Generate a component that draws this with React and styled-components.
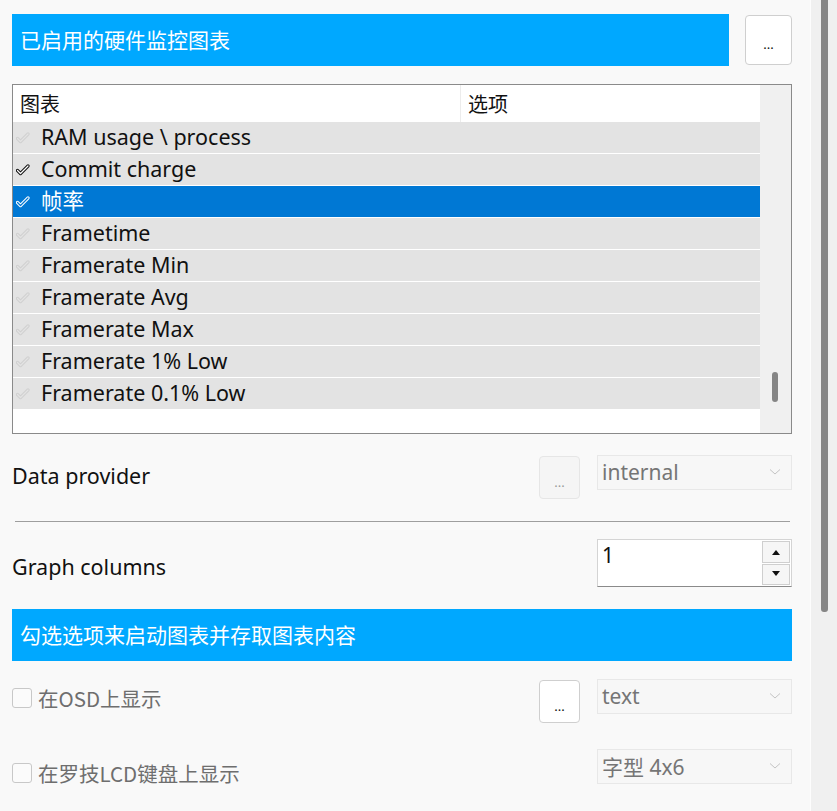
import React from "react";
import styled, { createGlobalStyle } from "styled-components";

const Global = createGlobalStyle`
  html, body { margin: 0; padding: 0; background: #f9f9f9; }
  body { font-family: "Noto Sans", "Noto Sans CJK SC", sans-serif; }
  * { box-sizing: border-box; }
`;

const Page = styled.div`
  display: flex;
  width: 837px;
  height: 811px;
  overflow: hidden;
  background: #f9f9f9;
`;

const Main = styled.div`
  flex: 1;
  display: flex;
  flex-direction: column;
  padding: 14px 18px 0 12px;
`;

const SideScroll = styled.div`
  width: 27px;
  background: #f0f0f0;
  border-left: 1px solid #fdfdfd;
  position: relative;
`;

const SideThumb = styled.div`
  position: absolute;
  left: 10px;
  top: 0;
  width: 7px;
  height: 612px;
  background: #868686;
  border-radius: 0 0 3px 3px;
`;

const TopRow = styled.div`
  display: flex;
  gap: 16px;
  align-items: flex-start;
`;

const Banner = styled.div`
  flex: 1;
  height: 52px;
  background: #00a8ff;
  color: #fff;
  font-family: "Noto Sans CJK SC", sans-serif;
  font-size: 21px;
  display: flex;
  align-items: center;
  padding-left: 8px;
  padding-bottom: 2px;
`;

const DotsButton = styled.button`
  width: ${(p) => p.$w || 47}px;
  height: ${(p) => p.$h || 50}px;
  margin-top: ${(p) => p.$mt || 1}px;
  background: ${(p) => (p.$disabled ? "#f5f5f5" : "#ffffff")};
  border: 1px solid ${(p) => (p.$disabled ? "#e6e6e6" : "#cfcfcf")};
  border-radius: 4px;
  color: ${(p) => (p.$disabled ? "#9a9a9a" : "#111")};
  font-family: "Noto Sans", sans-serif;
  font-size: 13px;
  font-weight: normal;
  letter-spacing: 0;
  padding: 8px 0 0;
  display: flex;
  align-items: center;
  justify-content: center;
  flex-shrink: 0;
`;

const ListBox = styled.div`
  margin-top: 18px;
  height: 350px;
  border: 1px solid #8a8a8a;
  background: #fff;
  display: flex;
`;

const ListInner = styled.div`
  flex: 1;
  display: flex;
  flex-direction: column;
`;

const HeaderRow = styled.div`
  display: grid;
  grid-template-columns: 447px 1fr;
  height: 37px;
  background: #fff;
`;

const HeaderCell = styled.div`
  font-family: "Noto Sans CJK SC", sans-serif;
  font-size: 20px;
  color: #111;
  display: flex;
  align-items: center;
  padding-left: 7px;
  border-left: ${(p) => (p.$divider ? "1px solid #ececec" : "none")};
`;

const Row = styled.div`
  height: 32px;
  border-bottom: 1px solid #fff;
  background: ${(p) => (p.$sel ? "#0078d4" : "#e3e3e3")};
  color: ${(p) => (p.$sel ? "#fff" : "#111")};
  display: flex;
  align-items: center;
  gap: 11px;
  padding-left: 3px;
  font-size: 21.5px;
  font-family: "Noto Sans", "Noto Sans CJK SC", sans-serif;
`;

const RowText = styled.span`
  line-height: 1;
  padding-bottom: 1px;
`;

const ListScroll = styled.div`
  width: 31px;
  background: #f0f0f0;
  position: relative;
`;

const ListThumb = styled.div`
  position: absolute;
  left: 12px;
  top: 287px;
  width: 6px;
  height: 30px;
  background: #858585;
  border-radius: 3px;
`;

const FormRow = styled.div`
  display: flex;
  align-items: flex-start;
  margin-top: ${(p) => p.$mt}px;
  height: ${(p) => p.$h}px;
`;

const Label = styled.div`
  flex: 1;
  font-size: 21.5px;
  line-height: 30px;
  color: #111;
  font-family: "Noto Sans", sans-serif;
  margin-top: ${(p) => p.$top || 0}px;
`;

const Select = styled.div`
  width: 195px;
  height: 35px;
  margin-left: 17px;
  background: #f7f7f7;
  border: 1px solid #e8e8e8;
  display: flex;
  align-items: center;
  justify-content: space-between;
  padding: 0 10px 2px 4px;
  color: #757575;
  font-size: 21px;
  font-family: "Noto Sans", "Noto Sans CJK SC", sans-serif;
`;

const Divider = styled.div`
  margin: 22px 2px 0 3px;
  height: 1px;
  background: #9e9e9e;
`;

const Spin = styled.div`
  width: 195px;
  height: 48px;
  background: #fff;
  border: 1px solid #d4d4d4;
  border-bottom-color: #8a8a8a;
  display: flex;
`;

const SpinValue = styled.div`
  flex: 1;
  font-size: 21px;
  color: #111;
  padding: 1px 0 0 4px;
  font-family: "Noto Sans", sans-serif;
`;

const SpinButtons = styled.div`
  width: 29px;
  display: flex;
  flex-direction: column;
  gap: 1px;
  padding: 1px 1px 1px 0;
`;

const SpinBtn = styled.div`
  flex: 1;
  background: #f6f6f6;
  border: 1px solid #cfcfcf;
  display: flex;
  align-items: center;
  justify-content: center;
`;

const Banner2 = styled(Banner)`
  flex: none;
  margin-top: 22px;
`;

const CheckLabel = styled.label`
  flex: 1;
  display: flex;
  align-items: center;
  gap: 6px;
  font-family: "Noto Sans CJK SC", sans-serif;
  font-size: 20.5px;
  line-height: 30px;
  color: #6e6e6e;
  margin-top: ${(p) => p.$top || 0}px;
`;

const Box = styled.span`
  width: 20px;
  height: 20px;
  border: 1px solid #c8c8c8;
  border-radius: 3px;
  background: #fbfbfb;
  flex-shrink: 0;
`;

const Spacer = styled.div`
  width: 40px;
`;

const Check = ({ color }) => (
  <svg width="14" height="14" viewBox="0 0 14 14">
    <path
      d="M1.5 7.5 L4.5 10.5 L12 3"
      fill="none"
      stroke={color}
      strokeWidth="3.2"
      strokeLinecap="round"
      strokeLinejoin="round"
    />
    <path
      d="M1.5 7.5 L4.5 10.5 L12 3"
      fill="none"
      stroke={color === "#d0d0d0" ? "#e3e3e3" : color === "#ffffff" ? "#0078d4" : "#ffffff"}
      strokeWidth="1.2"
      strokeLinecap="round"
      strokeLinejoin="round"
    />
  </svg>
);

const Chevron = () => (
  <svg width="12" height="8" viewBox="0 0 12 8">
    <path d="M1 1.5 L6 6 L11 1.5" fill="none" stroke="#c4c4c4" strokeWidth="1" />
  </svg>
);

const Tri = ({ up }) => (
  <svg width="10" height="6" viewBox="0 0 10 6">
    <path d={up ? "M1 6 L5 1 L9 6 Z" : "M1 0 L5 5 L9 0 Z"} fill="#111" />
  </svg>
);

const rows = [
  { t: "RAM usage \\ process", s: "off" },
  { t: "Commit charge", s: "on" },
  { t: "帧率", s: "sel" },
  { t: "Frametime", s: "off" },
  { t: "Framerate Min", s: "off" },
  { t: "Framerate Avg", s: "off" },
  { t: "Framerate Max", s: "off" },
  { t: "Framerate 1% Low", s: "off" },
  { t: "Framerate 0.1% Low", s: "off" },
];

export default function App() {
  return (
    <Page>
      <Global />
      <Main>
        <TopRow>
          <Banner>已启用的硬件监控图表</Banner>
          <DotsButton>...</DotsButton>
        </TopRow>

        <ListBox>
          <ListInner>
            <HeaderRow>
              <HeaderCell>图表</HeaderCell>
              <HeaderCell $divider>选项</HeaderCell>
            </HeaderRow>
            {rows.map((r) => (
              <Row key={r.t} $sel={r.s === "sel"}>
                <Check color={r.s === "sel" ? "#ffffff" : r.s === "on" ? "#111111" : "#d0d0d0"} />
                <RowText>{r.t}</RowText>
              </Row>
            ))}
          </ListInner>
          <ListScroll>
            <ListThumb />
          </ListScroll>
        </ListBox>

        <FormRow $mt={21} $h={44}>
          <Label $top={6}>Data provider</Label>
          <DotsButton $disabled $w={41} $h={43} $mt={1}>...</DotsButton>
          <Select>
            internal
            <Chevron />
          </Select>
        </FormRow>

        <Divider />

        <FormRow $mt={17} $h={48}>
          <Label $top={13}>Graph columns</Label>
          <Spin>
            <SpinValue>1</SpinValue>
            <SpinButtons>
              <SpinBtn>
                <Tri up />
              </SpinBtn>
              <SpinBtn>
                <Tri />
              </SpinBtn>
            </SpinButtons>
          </Spin>
        </FormRow>

        <Banner2>勾选选项来启动图表并存取图表内容</Banner2>

        <FormRow $mt={18} $h={44}>
          <CheckLabel $top={4}>
            <Box />
            在OSD上显示
          </CheckLabel>
          <DotsButton $w={41} $h={43} $mt={1}>...</DotsButton>
          <Select>
            text
            <Chevron />
          </Select>
        </FormRow>

        <FormRow $mt={26} $h={44}>
          <CheckLabel $top={9}>
            <Box />
            在罗技LCD键盘上显示
          </CheckLabel>
          <Spacer />
          <Select>
            字型 4x6
            <Chevron />
          </Select>
        </FormRow>
      </Main>
      <SideScroll>
        <SideThumb />
      </SideScroll>
    </Page>
  );
}
